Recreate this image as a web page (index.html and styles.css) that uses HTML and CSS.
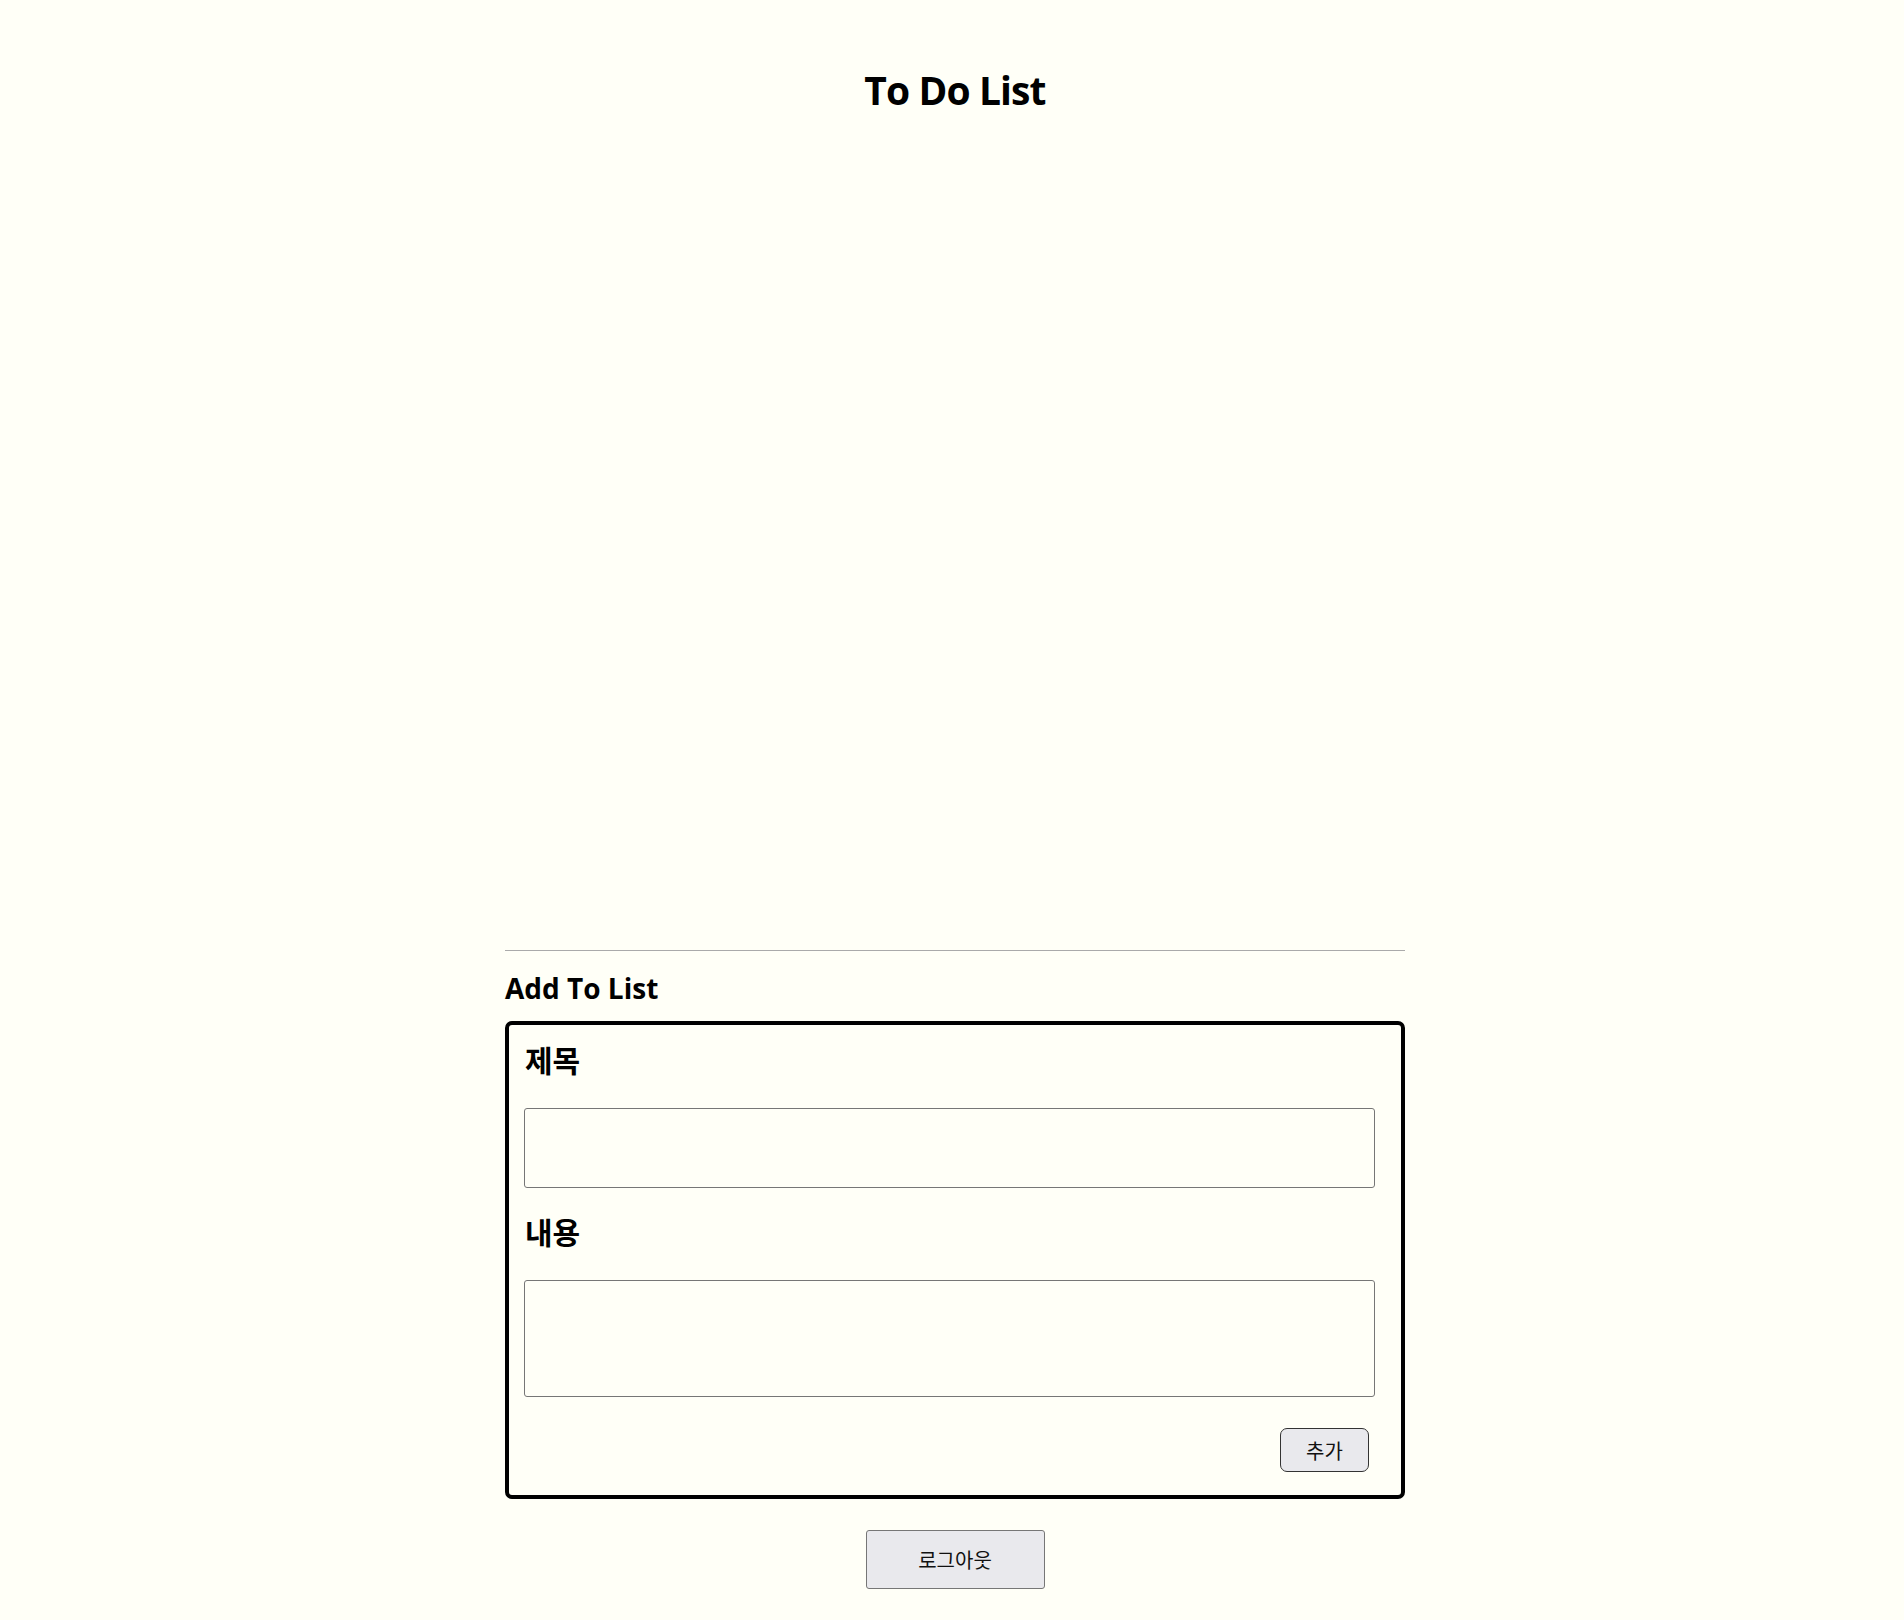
FILE: index.html
```html
<!DOCTYPE html>
<html lang="ko">
<head>
<meta charset="utf-8">
<title>To Do List</title>
<link rel="stylesheet" href="styles.css">
</head>
<body>
<main class="page">
  <h1 class="title">To Do List</h1>
  <section class="todo-list"></section>
  <hr class="divider">
  <h2 class="add-title">Add To List</h2>
  <form class="add-form">
    <label class="field-label" for="title">제목</label>
    <input class="field-input" id="title" type="text">
    <label class="field-label second" for="content">내용</label>
    <textarea class="field-area" id="content"></textarea>
    <div class="actions"><button class="add-btn" type="button">추가</button></div>
  </form>
  <div class="logout-row"><button class="logout-btn" type="button">로그아웃</button></div>
</main>
</body>
</html>
```
FILE: styles.css
```css
html, body {
  margin: 0;
  padding: 0;
  background: #fffff7;
}
body {
  padding-left: 6px;
  font-family: "Open Sans", "Noto Sans CJK KR", sans-serif;
  color: #000;
}
.page {
  width: 900px;
  margin: 0 auto;
  display: flex;
  flex-direction: column;
}
.title {
  margin: 67px 0 0;
  font-size: 39px;
  line-height: 46px;
  font-weight: 700;
  letter-spacing: -0.9px;
  text-align: center;
}
.todo-list {
  height: 837px;
}
.divider {
  margin: 0;
  border: 0;
  height: 1px;
  background: #aaaaaa;
}
.add-title {
  margin: 20px 0 0;
  font-size: 28px;
  line-height: 34px;
  font-weight: 700;
}
.add-form {
  margin-top: 16px;
  border: 4px solid #000;
  border-radius: 7px;
  padding: 17px 26px 23px 15px;
  display: flex;
  flex-direction: column;
}
.field-label {
  font-family: "Noto Sans CJK KR", sans-serif;
  font-size: 30px;
  line-height: 34px;
  font-weight: 700;
  padding-left: 1px;
}
.field-label.second {
  margin-top: 26px;
}
.field-input,
.field-area {
  box-sizing: border-box;
  width: 100%;
  margin: 32px 0 0;
  border: 1px solid #767676;
  border-radius: 3px;
  background: transparent;
  font: 16px "Noto Sans CJK KR", sans-serif;
}
.field-input {
  height: 80px;
}
.field-area {
  height: 117px;
  resize: none;
}
.actions {
  margin-top: 31px;
  display: flex;
  justify-content: flex-end;
  padding-right: 6px;
}
.add-btn {
  width: 89px;
  height: 44px;
  border: 1px solid #333;
  border-radius: 7px;
  background: #e9e9ed;
  font: 20px "Noto Sans CJK KR", sans-serif;
  color: #111;
  padding: 0;
}
.logout-row {
  margin-top: 31px;
  display: flex;
  justify-content: center;
}
.logout-btn {
  width: 179px;
  height: 59px;
  border: 1px solid #767676;
  border-radius: 3px;
  background: #e9e9ed;
  font: 20px "Noto Sans CJK KR", sans-serif;
  color: #111;
  padding: 0;
}
```
